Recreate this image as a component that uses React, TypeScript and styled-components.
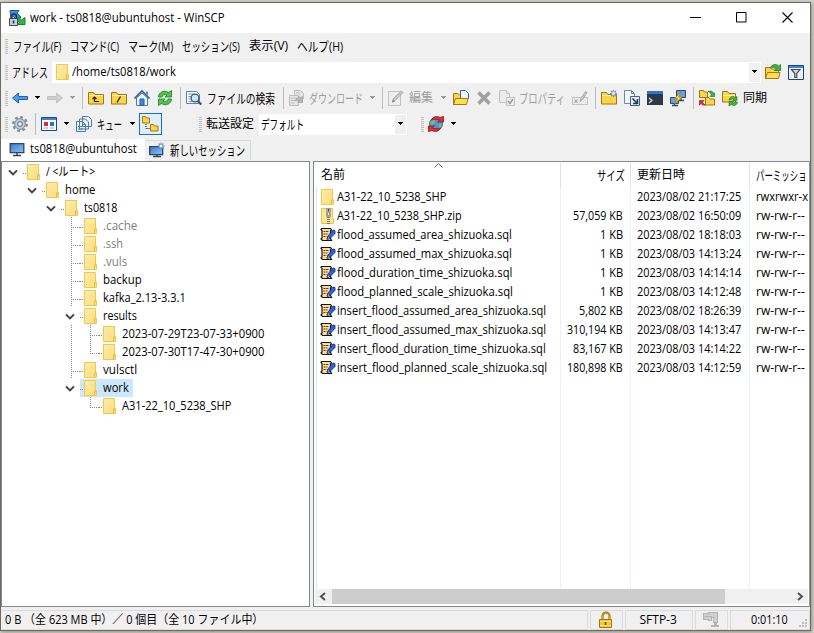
import React, { useLayoutEffect, useRef, useState } from 'react';
import styled, { createGlobalStyle } from 'styled-components';

const Global = createGlobalStyle`
  * { box-sizing: border-box; }
  html, body { margin: 0; height: 100%; }
  body {
    background: #d6d4c8;
    overflow: hidden;
    color: #000;
    font: 12px/16px "Open Sans", "Noto Sans CJK JP", sans-serif;
  }
  svg { display: block; flex: none; overflow: visible; }
`;

/* ---------- text set to the width of its slot ---------- */
const FitBox = styled.span<{ $w: number; $ml?: number; $color?: string; $y?: number; $kana?: boolean }>`
  display: block;
  flex: none;
  width: ${p => p.$w}px;
  height: 16px;
  margin-left: ${p => p.$ml ?? 0}px;
  margin-top: ${p => p.$y ?? 0}px;
  color: ${p => p.$color ?? '#000'};
  font-size: ${p => (p.$kana ? 13 : 12)}px;
  white-space: pre;
`;
const FitInner = styled.span`
  display: inline-block;
  vertical-align: top;
  line-height: 16px;
  transform-origin: 0 50%;
`;
const hasKana = (s: string) => /[\u30a0-\u30ff]/.test(s) && !/[0-9<]/.test(s);
function Fit({ w, ml, color, y, children }: { w: number; ml?: number; color?: string; y?: number; children: string }) {
  const ref = useRef<HTMLSpanElement>(null);
  const [scale, setScale] = useState(1);
  useLayoutEffect(() => {
    if (ref.current && ref.current.offsetWidth) setScale(w / ref.current.offsetWidth);
  }, [w, children]);
  return (
    <FitBox $w={w} $ml={ml} $color={color} $y={y} $kana={hasKana(children)}>
      <FitInner ref={ref} style={{ transform: `scaleX(${scale})` }}>{children}</FitInner>
    </FitBox>
  );
}

/* ---------- window frame ---------- */
const Desktop = styled.div`padding-top: 2px; height: 633px; width: 814px;`;
const Win = styled.div`
  width: 811px;
  height: 629px;
  border: 1px solid #6b6b66;
  background: #f0f0f0;
  display: flex;
  flex-direction: column;
  box-shadow: 1px 1px 4px rgba(0, 0, 0, 0.35);
`;
const TitleBar = styled.div`
  height: 30px;
  flex: none;
  background: #fff;
  display: flex;
  align-items: center;
  padding: 0 17px 0 8px;
`;
const Spacer = styled.div`flex: 1;`;
const WinButtons = styled.div`display: flex; gap: 35px; margin-top: -2px;`;
const Bar = styled.div<{ $h: number }>`
  display: flex;
  align-items: center;
  height: ${p => p.$h}px;
  flex: none;
`;
const Grip = styled.i<{ $ml?: number }>`
  flex: none;
  width: 3px;
  height: 15px;
  margin-left: ${p => p.$ml ?? 4}px;
  background: repeating-linear-gradient(#bdbdbd 0 1px, transparent 1px 2px);
`;
const Sep = styled.i<{ $ml: number }>`
  flex: none;
  width: 1px;
  height: 22px;
  margin-left: ${p => p.$ml}px;
  background: #bcbcbc;
`;
const Slot = styled.span<{ $ml: number }>`
  flex: none;
  margin-left: ${p => p.$ml}px;
`;
const AddressField = styled.div`
  display: flex;
  align-items: center;
  width: 709px;
  height: 21px;
  margin-left: 4px;
  padding: 0 1px 0 4px;
  background: #fff;
`;
const DropButton = styled.div`
  width: 11px;
  height: 19px;
  background: #f0f0f0;
  display: flex;
  align-items: center;
  justify-content: center;
`;
const Preset = styled.div`
  display: flex;
  align-items: center;
  width: 148px;
  height: 21px;
  margin-left: 5px;
  padding: 0 1px 0 2px;
  background: #fff;
`;
const PressedButton = styled.div`
  width: 23px;
  height: 22px;
  margin-left: 3px;
  border: 1px solid #0078d7;
  background: #e2effa;
  display: flex;
  align-items: center;
  justify-content: center;
`;

/* ---------- tabs ---------- */
const Tabs = styled.div`
  height: 22px;
  flex: none;
  display: flex;
  align-items: flex-end;
`;
const Tab = styled.div<{ $active?: boolean; $w: number }>`
  width: ${p => p.$w}px;
  height: ${p => (p.$active ? 22 : 20)}px;
  margin-bottom: ${p => (p.$active ? 0 : 1)}px;
  display: flex;
  align-items: center;
  background: ${p => (p.$active ? '#fff' : '#f0f0f0')};
  border: ${p => (p.$active ? '0 solid' : '1px solid #d9d9d9')};
  border-left: 0;
  border-bottom: 0;
  padding-left: ${p => (p.$active ? 8 : 4)}px;
  padding-bottom: ${p => (p.$active ? 2 : 1)}px;
`;

/* ---------- panels ---------- */
const Panels = styled.div`display: flex; gap: 3px; height: 446px; flex: none;`;
const Tree = styled.div`
  width: 309px;
  background: #fff;
  border: 1px solid #828790;
  padding-top: 1px;
  padding-left: 2px;
`;
const TreeRow = styled.div`height: 18px; display: flex; align-items: center;`;
const Indent = styled.div<{ $n: number }>`width: ${p => p.$n * 19}px; flex: none;`;
const Cell = styled.div<{ $line: 'none' | 'full' | 'end'; $stub?: boolean }>`
  width: 19px;
  height: 18px;
  flex: none;
  background-image:
    repeating-linear-gradient(#888 0 1px, transparent 1px 2px),
    repeating-linear-gradient(90deg, #888 0 1px, transparent 1px 2px);
  background-repeat: no-repeat;
  background-position: 10px 0, 10px 10px;
  background-size:
    ${p => (p.$line === 'none' ? '0 0' : p.$line === 'end' ? '1px 10px' : '1px 18px')},
    ${p => (p.$stub ? '9px 1px' : '0 0')};
`;
const ChevronCell = styled.div`
  width: 19px;
  height: 18px;
  flex: none;
  display: flex;
  align-items: center;
  justify-content: center;
  padding: 1px 1px 0 0;
`;
const Stub = styled.div<{ $sel?: boolean }>`
  width: 4px;
  height: 18px;
  flex: none;
  background: repeating-linear-gradient(90deg, #888 0 1px, transparent 1px 2px) 0 10px / 3px 1px no-repeat
    ${p => (p.$sel ? '#cce8ff' : 'transparent')};
`;
const Node = styled.div<{ $sel?: boolean }>`
  height: 18px;
  display: flex;
  align-items: center;
  padding-right: 4px;
  background: ${p => (p.$sel ? '#cce8ff' : 'transparent')};
`;

const List = styled.div`
  width: 497px;
  border: 1px solid #828790;
  border-right-color: #999da3;
  background: #fff;
  padding: 1px;
  overflow: hidden;
  display: flex;
  flex-direction: column;
`;
const Header = styled.div`
  display: grid;
  grid-template-columns: 246px 70px 119px 1fr;
  height: 24px;
  flex: none;
`;
const HeadCell = styled.div<{ $pad: number; $last?: boolean }>`
  position: relative;
  display: flex;
  align-items: center;
  overflow: hidden;
  padding-left: ${p => p.$pad}px;
  border-right: ${p => (p.$last ? 0 : 1)}px solid #e2e2e2;
`;
const SortMark = styled.svg`position: absolute; left: 119px; top: 0;`;
const Rows = styled.div`
  flex: 1;
  border-left: 1px solid #d3e8fb;
  margin-left: 1px;
  background:
    linear-gradient(#e7f1fc, #e7f1fc) 243px 0 / 1px 100% no-repeat,
    linear-gradient(#e7f1fc, #e7f1fc) 313px 0 / 1px 100% no-repeat,
    linear-gradient(#e7f1fc, #e7f1fc) 432px 0 / 1px 100% no-repeat;
`;
const FileRow = styled.div`
  display: grid;
  grid-template-columns: 243px 70px 119px 1fr;
  height: 19px;
`;
const FileCell = styled.div<{ $pad?: number; $end?: boolean }>`
  display: flex;
  align-items: center;
  overflow: hidden;
  justify-content: ${p => (p.$end ? 'flex-end' : 'flex-start')};
  padding-left: ${p => p.$pad ?? 0}px;
  padding-right: ${p => (p.$end ? 7 : 0)}px;
`;
const ScrollBar = styled.div`
  height: 15px;
  margin-bottom: 1px;
  background: #f0f0f0;
  display: flex;
  align-items: center;
  padding: 0 4px;
`;
const Thumb = styled.div`width: 393px; height: 15px; margin-left: 6px; background: #cdcdcd;`;

/* ---------- status ---------- */
const Status = styled.div`
  flex: 1;
  display: flex;
  gap: 2px;
  padding-top: 3px;
`;
const Pane = styled.div<{ $w: number; $center?: boolean }>`
  position: relative;
  width: ${p => p.$w}px;
  border: 1px solid #dcdcdc;
  border-left-color: ${p => (p.$center ? '#dcdcdc' : '#f0f0f0')};
  display: flex;
  align-items: center;
  padding-left: ${p => (p.$center ? 0 : 3)}px;
  padding-right: ${p => (p.$center ? 2 : 0)}px;
  justify-content: ${p => (p.$center ? 'center' : 'flex-start')};
`;
const SizeGrip = styled.svg`position: absolute; right: 1px; bottom: 1px;`;

/* ---------- icons ---------- */
const Y = '#f9d54a';
const YB = '#a87512';
const folderPath = 'M.5 2.5h5l1.5 2h8.5v9.500h-15z';

const Caret = ({ c = '#000' }: { c?: string }) => (
  <svg width="7" height="4" shapeRendering="crispEdges"><path d="M1 0h5v1h-1v1h-1v1h-1v-1h-1v-1h-1z" fill={c} /></svg>
);
const FolderIcon = () => (
  <svg width="14" height="16">
    <defs>
      <linearGradient id="fold" x1="0" y1="0" x2="1" y2="1">
        <stop offset="0" stopColor="#ffedab" /><stop offset="1" stopColor="#fddc7c" />
      </linearGradient>
    </defs>
    <path d="M.5.500h11v10h1v5h-12z" fill="url(#fold)" stroke="#edc94d" />
    <path d="M10.500 15.500v-4.500h2" fill="none" stroke="#e5bb36" />
  </svg>
);
const ZipIcon = () => (
  <svg width="14" height="16">
    <path d="M.5.500h11v10h1v5h-12z" fill="#ffe594" stroke="#e8c44a" />
    <path d="M5.500.500h4v8h-4z" fill="#c9ccd0" stroke="#8b8b8b" strokeWidth=".7" />
    <path d="M7.500 9v7" stroke="#777" strokeWidth="3" strokeDasharray="1 1" />
    <path d="M7.500 1v2.500" stroke="#444" strokeWidth="1.500" />
    <path d="M6.500 4.500h2v3h-2z" fill="#eee" stroke="#555" strokeWidth=".5" />
  </svg>
);
const SqlIcon = () => (
  <svg width="16" height="16">
    <path d="M1.500 1.500h9l1 1.500-1 1v7.500l1 2h-9l-1.500-1.500 1-1v-7.500l-1-1z" fill="#ffdc9c" stroke="#17120a" strokeWidth="1.200" />
    <path d="M3.500 4.500h5.500M3.500 7h4M3.500 9.500h3" stroke="#5b3c12" strokeDasharray="2 .6" />
    <path d="M7 12l1-3 5-6 2 .5v3l-5 5z" fill="#2864e8" stroke="#0a2380" strokeWidth=".8" />
    <path d="M7 12.500l1-3 2 2z" fill="#fff" stroke="#111" strokeWidth=".7" />
  </svg>
);
const AppIcon = () => (
  <svg width="17" height="17">
    <path d="M1 .5h9l-2 2.500 4 4-3.500 3.500-4-4-2.500 2z" fill="#3b8bea" stroke="#155aae" />
    <path d="M16 14.500h-8l2-2-2-3 2-2 2.500 2.500 3.500-2.500z" fill="#35b53d" stroke="#16822b" />
    <path d="M2.500 9v-2.500a2.500 2.500 0 015 0v2.500" fill="none" stroke="#2f353d" strokeWidth="1.500" />
    <path d="M.5 8.500h8v7h-8z" fill="#c8d2dc" stroke="#3d4854" />
    <path d="M4.500 10.500v3" stroke="#26303b" strokeWidth="1.600" />
  </svg>
);
const Arrow = ({ off }: { off?: boolean }) => (
  <svg width="16" height="16">
    <path d={off ? 'M15.500 8l-6-5v3.500h-9v3h9v3.500z' : 'M.5 8l6-5v3.500h9v3h-9v3.500z'}
      fill={off ? '#cfcfcf' : '#4e9cf0'} stroke={off ? '#c2c2c2' : '#1c61b5'} />
  </svg>
);
const YellowFolder = ({ children }: { children?: React.ReactNode }) => (
  <svg width="16" height="16">
    <path d={folderPath} fill={Y} stroke={YB} />
    <path d="M1 5.500h14" stroke="#fff1a2" />
    {children}
  </svg>
);
const HomeIcon = () => (
  <svg width="16" height="16">
    <path d="M2.500 8v7.500h11v-7.500l-5.500-5z" fill="#edf4fb" stroke="#59789d" />
    <path d="M12 1.500h2v4l-2-2z" fill="#718bad" />
    <path d="M.5 8.500l7.500-7.500 7.500 7.500" fill="none" stroke="#2564a8" strokeWidth="1.700" />
    <path d="M6 9h4v6.500h-4z" fill="#418cdf" stroke="#225d9e" />
  </svg>
);
const Refresh = () => (
  <svg width="16" height="16">
    <path d="M1.500 7c0-4.500 5.500-7.500 10-4.500l3-2v6.500h-6.500l2-2c-2-1-4.500-.5-5 2z" fill="#4fc446" stroke="#16802a" strokeWidth=".8" />
    <path d="M14.500 9c0 4.500-5.500 7.500-10 4.500l-3 2v-6.500h6.500l-2 2c2 1 4.500.5 5-2z" fill="#4fc446" stroke="#16802a" strokeWidth=".8" />
  </svg>
);
const FindIcon = () => (
  <svg width="17" height="16">
    <path d="M.5 1.500h10l3 3v9h-13z" fill="#f3f8fd" stroke="#5787b8" />
    <path d="M2.500 4h5M2.500 6.500h3M2.500 9h2M2.500 11.500h4" stroke="#7f9bba" />
    <circle cx="9" cy="8" r="3.900" fill="#cbe5fa" stroke="#45525f" strokeWidth="1.300" />
    <path d="M11.800 11l3.500 3.500" stroke="#45525f" strokeWidth="2.200" />
  </svg>
);
const DownloadIcon = () => (
  <svg width="16" height="16" fill="#e6e6e6" stroke="#bcbcbc">
    <path d="M5.500.500h6l3 3v5h-9z" /><path d="M.5 5.500h9v10h-9z" />
    <path d="M2 8h5M2 10.500h5M2 13h3M7 3h4" />
    <path d="M6.500 11c1-4 4-5 5-3l2-1.500v6h-5l1.500-2c-1-1-2-.5-3.500.5z" fill="#b7b7b7" stroke="#a9a9a9" />
  </svg>
);
const EditIcon = () => (
  <svg width="16" height="16">
    <path d="M.5 1.500h12v14h-12z" fill="#eee" stroke="#c2c2c2" />
    <path d="M4.500 12l1-3.500 8-7.500 1.500 1.500-8 8z" fill="#ccc" stroke="#a3a3a3" />
    <path d="M4 12.500l1-3 2 2z" fill="#888" />
  </svg>
);
const OpenIcon = ({ green }: { green?: boolean }) => (
  <svg width="16" height="16">
    <path d="M.5 15v-11.500h4.500l1.500 1.500h7v4" fill="#fbd346" stroke={YB} />
    {green
      ? <path d="M5 4c2-4 6.500-4.500 8.500-2l2-1.500v6h-6l2-2c-2-1.500-4-1.500-6.500-.5z" fill="#3cb443" stroke="#168128" strokeWidth=".8" />
      : <path d="M7.500 8.500v-8h5l3 3v5z" fill="#eef6ff" stroke="#3568a0" />}
    <path d="M.5 14.500l2-6h12.500l-1.500 6z" fill="#ffdf50" stroke={YB} />
  </svg>
);
const FilterIcon = () => (
  <svg width="16" height="15">
    <path d="M.5.500h15v14h-15z" fill="#eaf3fc" stroke="#12458c" /><path d="M1 1h14v2h-14z" fill="#3d82dc" />
    <path d="M3.500 4.500h8.500l-3.200 4v4h-2v-4z" fill="#d7d7d7" stroke="#4c4c4c" strokeWidth="1.200" />
  </svg>
);
const DeleteIcon = () => (
  <svg width="16" height="16"><path d="M2.500 2.500l11 11M13.500 2.500l-11 11" stroke="#a0a0a0" strokeWidth="3.600" /></svg>
);
const PropsIcon = () => (
  <svg width="16" height="16" fill="#ececec" stroke="#c2c2c2">
    <path d="M.5.500h7l3 3v9h-10z" /><path d="M7.500.500v3h3" />
    <path d="M7.500 7.500h8v8h-8z" /><path d="M9 11l2 2.500 3-4.500" fill="none" stroke="#999" strokeWidth="1.500" />
  </svg>
);
const RenameIcon = () => (
  <svg width="16" height="16">
    <path d="M.5 7.500h15v7h-15z" fill="#ececec" stroke="#c2c2c2" />
    <path d="M2.500 9.500l3 3.500M5.500 9.500l-3 3.500" stroke="#999" />
    <path d="M8 11.500l1-3 4.500-7 1.500 1-4.500 7z" fill="#d0d0d0" stroke="#a3a3a3" />
  </svg>
);
const Burst = ({ x = 12.500, y = 3.500 }) => (
  <g>
    <path d={`M${x - 3.500} ${y}h7M${x} ${y - 3.500}v7M${x - 2.500} ${y - 2.500}l5 5M${x + 2.500} ${y - 2.500}l-5 5`} stroke="#6d91b6" strokeWidth="1.200" />
    <circle cx={x} cy={y} r="1.700" fill="#eef6ff" stroke="#86a8ca" strokeWidth=".7" />
  </g>
);
const ShortcutIcon = () => (
  <svg width="16" height="16">
    <path d="M.5.500h7l3 3v10h-10z" fill="#f1f7fd" stroke="#688dac" /><path d="M7.500.500v3h3" fill="none" stroke="#688dac" />
    <path d="M6.500 6.500h9v9h-9z" fill="#e1edf8" stroke="#45627f" />
    <path d="M8.500 8.500l5 5M13.500 9v4.500h-4.500" fill="none" stroke="#1d3c5c" strokeWidth="1.600" />
  </svg>
);
const TerminalIcon = () => (
  <svg width="16" height="15">
    <path d="M0 0h16v14h-16z" fill="#2e3947" /><path d="M0 0h16v3h-16z" fill="#2c75cd" />
    <path d="M2 7l3 2.500-3 2.500" fill="none" stroke="#dde4ea" strokeWidth="1.200" />
  </svg>
);
const PuttyIcon = () => (
  <svg width="16" height="16">
    <path d="M6.500.500h9v7h-9zM.5 7.500h8v6h-8z" fill="#629fe8" stroke="#34475b" />
    <path d="M11 8v2M9 10.500h5M4.500 14v1M2 15.500h6" stroke="#34475b" strokeWidth="1.300" />
    <path d="M11 2l-6.500 6.500h3l-3 5.500 7.500-7h-3.500z" fill="#ffdc37" stroke="#ae7d14" strokeWidth=".8" />
  </svg>
);
const SyncPair = () => (
  <svg width="16" height="16">
    <path d="M.5.500h4l1 1.500h3v5.500h-8zM6.500 7.500h3.500l1 1.500h4.500v6h-9z" fill={Y} stroke={YB} />
    <path d="M9 1.500c3-1 5 0 5 1.500h1.500v3.500h-4.500l1.500-1.500c-.5-1.500-1.500-2.500-3.500-3.500z" fill="#3cb443" stroke="#168128" strokeWidth=".7" />
    <path d="M6.500 15c-2.500.5-4-.5-4.500-1.500l-1.500 1.500v-4.500h4.500l-1.500 1.500c.5 1.500 1.500 2.500 3 3z" fill="#dc3434" stroke="#a71616" strokeWidth=".7" />
  </svg>
);
const SyncBrowse = () => (
  <svg width="17" height="17">
    <path d="M.5 1.500h5l1.500 2h6.500v8.500h-13z" fill={Y} stroke={YB} /><path d="M1 5.500h12" stroke="#fff1a2" />
    <path d="M7 10c.5-3.500 4-4.500 6-2.500l2-1v4h-4.500l1.500-1.500c-1.500-.5-2.500 0-3 1z" fill="#3cb443" stroke="#168128" strokeWidth=".6" />
    <path d="M15.500 12c-.5 3.500-4 4.500-6 2.500l-2.500 1.500v-4.500h4.500l-1.500 1.500c1.500.5 2.500 0 3-1z" fill="#3cb443" stroke="#168128" strokeWidth=".6" />
  </svg>
);
const GearIcon = () => (
  <svg width="16" height="16">
    <circle cx="8" cy="8" r="6.800" fill="none" stroke="#7b8792" strokeWidth="2.200" strokeDasharray="2.700 2.640" />
    <circle cx="8" cy="8" r="5.300" fill="#c5ced7" stroke="#7b8792" />
    <circle cx="8" cy="8" r="2.400" fill="#f0f0f0" stroke="#7b8792" strokeWidth="1.200" />
  </svg>
);
const ViewIcon = () => (
  <svg width="16" height="14">
    <path d="M.5.500h15v13h-15z" fill="#f8fbff" stroke="#174b91" /><path d="M1 1h14v2h-14z" fill="#3d82dc" />
    <path d="M3 5h4v4h-4z" fill="#df2929" /><path d="M9 5h4v4h-4z" fill="#2872d5" />
    <path d="M3 11h4M9 11h4" stroke="#9babba" />
  </svg>
);
const QueueIcon = () => (
  <svg width="16" height="16" fill="#eaf3fb" stroke="#507da7">
    <path d="M6.500.500h6l3 3v7h-9zM3.500 3h6l3 3v7h-9zM.5 5.500h6l3 3v7h-9z" />
    <path d="M6.500 5.500v3h3M2 10.500h5M2 13h5" fill="none" />
  </svg>
);
const TreeIcon = () => (
  <svg width="17" height="16">
    <path d="M.5.500h3l1 1.500h3v5h-7zM8.500 8.500h3l1 1.500h3.500v5h-7.500z" fill={Y} stroke={YB} />
    <path d="M4 8v4.500h4" fill="none" stroke="#000" strokeDasharray="1 1" />
  </svg>
);
const GlobeSync = () => (
  <svg width="17" height="17">
    <circle cx="8" cy="8" r="6.500" fill="#4b96df" stroke="#316dad" />
    <path d="M3 5l3-2 1 3-3 3-2-1zM11 8l3-1-1 4-2 2z" fill="#71c36a" />
    <path d="M3.500 4c1.500-3.500 5.500-4.500 8.500-2.500l3.500-1v5.500h-6l2-1.800c-2-1.200-4-1.200-8-.2z" fill="#de3030" stroke="#9d1414" strokeWidth=".8" />
    <path d="M12.500 12c-1.500 3.500-5.500 4.500-8.500 2.500l-3.500 1v-5.500h6l-2 1.800c2 1.200 4 1.200 8 .2z" fill="#de3030" stroke="#9d1414" strokeWidth=".8" />
  </svg>
);
const Monitor = ({ fresh }: { fresh?: boolean }) => (
  <svg width="16" height="16">
    <defs><linearGradient id="scr" x1="0" y1="0" x2="1" y2="1"><stop offset="0" stopColor="#347cd2" /><stop offset="1" stopColor="#8cc3f7" /></linearGradient></defs>
    <path d={fresh ? 'M.7 4.700h13v8h-13z' : 'M1.200 2.700h13.600v9h-13.600z'} fill="url(#scr)" stroke="#364353" strokeWidth="1.300" />
    <path d="M8 12v2.500M4 14.500h8" stroke="#364353" strokeWidth="1.500" />
    {fresh && <Burst x={12} y={4} />}
  </svg>
);
const Chevron = () => (
  <svg width="10" height="7"><path d="M1 1.300l4 4 4-4" fill="none" stroke="#404040" strokeWidth="1.900" /></svg>
);
const LockIcon = () => (
  <svg width="14" height="16">
    <path d="M3.500 8v-4a3.500 3.300 0 017 0v4" fill="none" stroke="#a2720e" strokeWidth="2.200" />
    <path d="M3.500 8v-4a3.500 3.300 0 017 0v4" fill="none" stroke="#dda829" strokeWidth=".9" />
    <path d="M.5 7.500h12v8h-12z" fill="#fac82e" stroke="#a87512" />
    <path d="M1 9.500h11M1 13.500h11" stroke="#ffe37c" /><path d="M6.500 10v3" stroke="#714b00" strokeWidth="1.600" />
  </svg>
);
const CompressIcon = () => (
  <svg width="16" height="16" shapeRendering="crispEdges">
    <path d="M.5 1.500h5v-1h9v10h-4v-5h-2v3h-3v-1h-5z" fill="#cfcfcf" stroke="#b4b4b4" />
    <path d="M1 4.500h8" stroke="#b4b4b4" />
    <path d="M11 11h3v2h-3zM8 13h8v2h-8z" fill="#b4b4b4" />
  </svg>
);

/* ---------- data ---------- */
type Branch = { name: string; w: number; depth: number; open?: boolean; dim?: boolean; end?: boolean; rail?: boolean; sel?: boolean };
const branches: Branch[] = [
  { name: '/ <ルート>', w: 49, depth: 0, open: true },
  { name: 'home', w: 30, depth: 1, open: true },
  { name: 'ts0818', w: 33, depth: 2, open: true },
  { name: '.cache', w: 34, depth: 3, dim: true },
  { name: '.ssh', w: 20, depth: 3, dim: true },
  { name: '.vuls', w: 24, depth: 3, dim: true },
  { name: 'backup', w: 39, depth: 3 },
  { name: 'kafka_2.13-3.3.1', w: 83, depth: 3 },
  { name: 'results', w: 34, depth: 3, open: true },
  { name: '2023-07-29T23-07-33+0900', w: 142, depth: 4, rail: true },
  { name: '2023-07-30T17-47-30+0900', w: 142, depth: 4, rail: true, end: true },
  { name: 'vulsctl', w: 34, depth: 3 },
  { name: 'work', w: 26, depth: 3, open: true, sel: true },
  { name: 'A31-22_10_5238_SHP', w: 109, depth: 4, end: true },
];
type FileItem = [kind: 'dir' | 'zip' | 'sql', name: string, w: number, size: string, sw: number, date: string, perm: string];
const files: FileItem[] = [
  ['dir', 'A31-22_10_5238_SHP', 109, '', 0, '2023/08/02 21:17:25', 'rwxrwxr-x'],
  ['zip', 'A31-22_10_5238_SHP.zip', 125, '57,059 KB', 50, '2023/08/02 16:50:09', 'rw-rw-r--'],
  ['sql', 'flood_assumed_area_shizuoka.sql', 175, '1 KB', 23, '2023/08/02 18:18:03', 'rw-rw-r--'],
  ['sql', 'flood_assumed_max_shizuoka.sql', 175, '1 KB', 23, '2023/08/03 14:13:24', 'rw-rw-r--'],
  ['sql', 'flood_duration_time_shizuoka.sql', 175, '1 KB', 23, '2023/08/03 14:14:14', 'rw-rw-r--'],
  ['sql', 'flood_planned_scale_shizuoka.sql', 176, '1 KB', 23, '2023/08/03 14:12:48', 'rw-rw-r--'],
  ['sql', 'insert_flood_assumed_area_shizuoka.sql', 209, '5,802 KB', 44, '2023/08/02 18:26:39', 'rw-rw-r--'],
  ['sql', 'insert_flood_assumed_max_shizuoka.sql', 209, '310,194 KB', 56, '2023/08/03 14:13:47', 'rw-rw-r--'],
  ['sql', 'insert_flood_duration_time_shizuoka.sql', 209, '83,167 KB', 50, '2023/08/03 14:14:22', 'rw-rw-r--'],
  ['sql', 'insert_flood_planned_scale_shizuoka.sql', 210, '180,898 KB', 56, '2023/08/03 14:12:59', 'rw-rw-r--'],
];
const grey = '#9d9d9d';

export default function App() {
  return (
    <Desktop>
      <Global />
      <Win>
        <TitleBar>
          <AppIcon />
          <Fit w={195} ml={4}>work - ts0818@ubuntuhost - WinSCP</Fit>
          <Spacer />
          <WinButtons>
            <svg width="11" height="11"><path d="M0 5.500h11" stroke="#000" /></svg>
            <svg width="11" height="11"><path d="M.5.500h9.500v9.500h-9.500z" fill="none" stroke="#000" /></svg>
            <svg width="11" height="11"><path d="M.5.500l10 10M10.500.500l-10 10" stroke="#000" strokeWidth="1.100" /></svg>
          </WinButtons>
        </TitleBar>

        <Bar $h={26}>
          <Grip />
          <Fit w={48} ml={5}>ファイル(F)</Fit>
          <Fit w={49} ml={9}>コマンド(C)</Fit>
          <Fit w={45} ml={9}>マーク(M)</Fit>
          <Fit w={58} ml={9}>セッション(S)</Fit>
          <Fit w={39} ml={9}>表示(V)</Fit>
          <Fit w={46} ml={9}>ヘルプ(H)</Fit>
        </Bar>

        <Bar $h={26}>
          <Grip />
          <Fit w={36} ml={4}>アドレス</Fit>
          <AddressField>
            <FolderIcon />
            <Fit w={104} ml={2}>/home/ts0818/work</Fit>
            <Spacer />
            <DropButton><Caret /></DropButton>
          </AddressField>
          <Slot $ml={4}><OpenIcon green /></Slot>
          <Slot $ml={7}><FilterIcon /></Slot>
        </Bar>

        <Bar $h={26}>
          <Grip />
          <Slot $ml={4}><Arrow /></Slot>
          <Slot $ml={6}><Caret /></Slot>
          <Slot $ml={6}><Arrow off /></Slot>
          <Slot $ml={6}><Caret c={grey} /></Slot>
          <Sep $ml={6} />
          <Slot $ml={5}><YellowFolder><path d="M6.500 12v-5M4.500 9l2-2 2 2M6.500 11.500h4.500" fill="none" stroke="#2b2200" strokeWidth="1.200" /></YellowFolder></Slot>
          <Slot $ml={7}><YellowFolder><path d="M6 12.500l3.500-6" stroke="#2b2200" strokeWidth="1.300" /></YellowFolder></Slot>
          <Slot $ml={7}><HomeIcon /></Slot>
          <Slot $ml={7}><Refresh /></Slot>
          <Sep $ml={7} />
          <Slot $ml={5}><FindIcon /></Slot>
          <Fit w={68} ml={4}>ファイルの検索</Fit>
          <Sep $ml={8} />
          <Slot $ml={5}><DownloadIcon /></Slot>
          <Fit w={54} ml={4} color={grey}>ダウンロード</Fit>
          <Slot $ml={6}><Caret c={grey} /></Slot>
          <Sep $ml={6} />
          <Slot $ml={5}><EditIcon /></Slot>
          <Fit w={24} ml={5} color={grey}>編集</Fit>
          <Slot $ml={7}><Caret c={grey} /></Slot>
          <Slot $ml={6}><OpenIcon /></Slot>
          <Slot $ml={7}><DeleteIcon /></Slot>
          <Slot $ml={7}><PropsIcon /></Slot>
          <Fit w={46} ml={4} color={grey}>プロパティ</Fit>
          <Slot $ml={7}><RenameIcon /></Slot>
          <Sep $ml={7} />
          <Slot $ml={5}><YellowFolder><Burst /></YellowFolder></Slot>
          <Slot $ml={7}><ShortcutIcon /></Slot>
          <Slot $ml={7}><TerminalIcon /></Slot>
          <Slot $ml={7}><PuttyIcon /></Slot>
          <Sep $ml={7} />
          <Slot $ml={5}><SyncPair /></Slot>
          <Slot $ml={7}><SyncBrowse /></Slot>
          <Fit w={24} ml={4}>同期</Fit>
        </Bar>

        <Bar $h={26}>
          <Grip />
          <Slot $ml={4}><GearIcon /></Slot>
          <Sep $ml={7} />
          <Slot $ml={5}><ViewIcon /></Slot>
          <Slot $ml={6}><Caret /></Slot>
          <Slot $ml={6}><QueueIcon /></Slot>
          <Fit w={25} ml={5}>キュー</Fit>
          <Slot $ml={7}><Caret /></Slot>
          <PressedButton><TreeIcon /></PressedButton>
          <Grip $ml={37} />
          <Fit w={48} ml={4}>転送設定</Fit>
          <Preset>
            <Fit w={43}>デフォルト</Fit>
            <Spacer />
            <DropButton><Caret /></DropButton>
          </Preset>
          <Grip $ml={14} />
          <Slot $ml={4}><GlobeSync /></Slot>
          <Slot $ml={5}><Caret /></Slot>
        </Bar>
        <Bar $h={2} />

        <Tabs>
          <Tab $active $w={144}><Monitor /><Fit w={107} ml={5}>ts0818@ubuntuhost</Fit></Tab>
          <Tab $w={106}><Monitor fresh /><Fit w={75} ml={5}>新しいセッション</Fit></Tab>
        </Tabs>

        <Panels>
          <Tree>
            {branches.map(b => (
              <TreeRow key={b.name + b.depth}>
                <Indent $n={b.depth > 3 ? 3 : b.depth} />
                {b.depth === 4 && <Cell $line={b.rail ? 'full' : 'none'} />}
                {b.open ? <ChevronCell><Chevron /></ChevronCell> : <Cell $line={b.end ? 'end' : 'full'} $stub />}
                <Stub $sel={b.sel} />
                <Node $sel={b.sel}>
                  <FolderIcon />
                  <Fit w={b.w} ml={5} color={b.dim ? '#808080' : undefined}>{b.name}</Fit>
                </Node>
              </TreeRow>
            ))}
          </Tree>
          <List>
            <Header>
              <HeadCell $pad={6}>
                <Fit w={24}>名前</Fit>
                <SortMark width="9" height="5"><path d="M.5 4.500l4-4 4 4" fill="none" stroke="#666" /></SortMark>
              </HeadCell>
              <HeadCell $pad={36}><Fit w={28}>サイズ</Fit></HeadCell>
              <HeadCell $pad={6}><Fit w={48}>更新日時</Fit></HeadCell>
              <HeadCell $pad={6} $last><Fit w={59}>パーミッション</Fit></HeadCell>
            </Header>
            <Rows>
              {files.map(([kind, name, w, size, sw, date, perm]) => (
                <FileRow key={name}>
                  <FileCell $pad={kind === 'sql' ? 3 : 4}>
                    {kind === 'dir' ? <FolderIcon /> : kind === 'zip' ? <ZipIcon /> : <SqlIcon />}
                    <Fit w={w} ml={kind === 'sql' ? 1 : 2}>{name}</Fit>
                  </FileCell>
                  <FileCell $end>{size && <Fit w={sw}>{size}</Fit>}</FileCell>
                  <FileCell $pad={7}><Fit w={104}>{date}</Fit></FileCell>
                  <FileCell $pad={7}><Fit w={perm === 'rwxrwxr-x' ? 52 : 49}>{perm}</Fit></FileCell>
                </FileRow>
              ))}
            </Rows>
            <ScrollBar>
              <svg width="7" height="9"><path d="M6 1l-4 3.500 4 3.500" fill="none" stroke="#505050" strokeWidth="2" /></svg>
              <Thumb />
              <Spacer />
              <svg width="7" height="9"><path d="M1 1l4 3.500-4 3.500" fill="none" stroke="#505050" strokeWidth="2" /></svg>
            </ScrollBar>
          </List>
        </Panels>

        <Status>
          <Pane $w={587}><Fit w={258}>0 B （全 623 MB 中）／ 0 個目（全 10 ファイル中）</Fit></Pane>
          <Pane $w={33} $center><LockIcon /></Pane>
          <Pane $w={68} $center><Fit w={37}>SFTP-3</Fit></Pane>
          <Pane $w={33} $center><CompressIcon /></Pane>
          <Pane $w={80} $center>
            <Fit w={37}>0:01:10</Fit>
            <SizeGrip width="9" height="9"><path d="M6 0h2v2h-2zM3 3h2v2h-2zM6 3h2v2h-2zM0 6h2v2h-2zM3 6h2v2h-2zM6 6h2v2h-2z" fill="#bfbfbf" /></SizeGrip>
          </Pane>
        </Status>
      </Win>
    </Desktop>
  );
}
